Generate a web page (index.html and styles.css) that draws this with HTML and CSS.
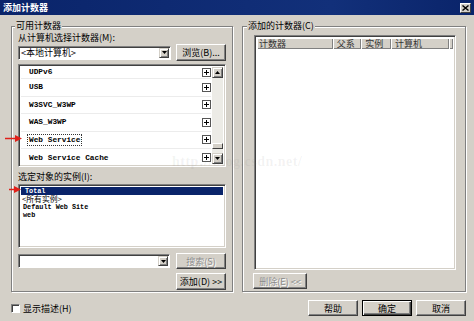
FILE: index.html
```html
<!DOCTYPE html>
<html>
<head>
<meta charset="utf-8">
<link rel="stylesheet" href="styles.css">
</head>
<body>
<div class="titlebar">
  <span class="title">添加计数器</span>
  <span class="close"><svg width="7" height="6" viewBox="0 0 7 6"><path d="M0.5 0.5 L6.5 5.5 M6.5 0.5 L0.5 5.5" stroke="#000" stroke-width="1.4"/></svg></span>
</div>
<div class="main">
  <div class="group gleft">
    <span class="legend">可用计数器</span>
    <div class="label">从计算机选择计数器(M):</div>
    <div class="row r1">
      <div class="combo c1"><span class="combo-text">&lt;本地计算机&gt;</span><span class="drop"><svg width="5" height="3" viewBox="0 0 5 3"><path d="M0 0H5L2.5 3Z" fill="#000"/></svg></span></div>
      <div class="btn browse">浏览(B)...</div>
    </div>
    <div class="sunken counters">
      <div class="rows">
        <div class="crow first"><span class="ctext">UDPv6</span><svg class="plus" width="9" height="9" viewBox="0 0 9 9"><rect x="0.5" y="0.5" width="8" height="8" fill="#fff" stroke="#555"/><path d="M2 4.5H7M4.5 2V7" stroke="#000"/></svg></div>
        <div class="crow"><span class="ctext">USB</span><svg class="plus" width="9" height="9" viewBox="0 0 9 9"><rect x="0.5" y="0.5" width="8" height="8" fill="#fff" stroke="#555"/><path d="M2 4.5H7M4.5 2V7" stroke="#000"/></svg></div>
        <div class="crow"><span class="ctext">W3SVC_W3WP</span><svg class="plus" width="9" height="9" viewBox="0 0 9 9"><rect x="0.5" y="0.5" width="8" height="8" fill="#fff" stroke="#555"/><path d="M2 4.5H7M4.5 2V7" stroke="#000"/></svg></div>
        <div class="crow"><span class="ctext">WAS_W3WP</span><svg class="plus" width="9" height="9" viewBox="0 0 9 9"><rect x="0.5" y="0.5" width="8" height="8" fill="#fff" stroke="#555"/><path d="M2 4.5H7M4.5 2V7" stroke="#000"/></svg></div>
        <div class="crow"><span class="ctext focus">Web Service</span><svg class="plus" width="9" height="9" viewBox="0 0 9 9"><rect x="0.5" y="0.5" width="8" height="8" fill="#fff" stroke="#555"/><path d="M2 4.5H7M4.5 2V7" stroke="#000"/></svg></div>
        <div class="crow last"><span class="ctext">Web Service Cache</span><svg class="plus" width="9" height="9" viewBox="0 0 9 9"><rect x="0.5" y="0.5" width="8" height="8" fill="#fff" stroke="#555"/><path d="M2 4.5H7M4.5 2V7" stroke="#000"/></svg></div>
      </div>
      <div class="scrollbar">
        <div class="sbtn"><svg width="5" height="3" viewBox="0 0 5 3"><path d="M0 3H5L2.5 0Z" fill="#000"/></svg></div>
        <div class="track"><div class="thumb"></div></div>
        <div class="sbtn"><svg width="5" height="3" viewBox="0 0 5 3"><path d="M0 0H5L2.5 3Z" fill="#000"/></svg></div>
      </div>
    </div>
    <div class="label l2">选定对象的实例(I):</div>
    <div class="sunken instances">
      <div class="inst sel"><span>Total</span></div>
      <div class="inst cjk">&lt;所有实例&gt;</div>
      <div class="inst">Default Web Site</div>
      <div class="inst">web</div>
    </div>
    <div class="row r3">
      <div class="combo c2"><span class="combo-text"></span><span class="drop"><svg width="5" height="3" viewBox="0 0 5 3"><path d="M0 0H5L2.5 3Z" fill="#000"/></svg></span></div>
      <div class="btn disabled search">搜索(S)</div>
    </div>
    <div class="row r4">
      <div class="btn add">添加(D) &gt;&gt;</div>
    </div>
  </div>
  <div class="group gright">
    <span class="legend">添加的计数器(C)</span>
    <div class="sunken listview">
      <div class="lvhead">
        <div class="hcell h1">计数器</div>
        <div class="hcell h2">父系</div>
        <div class="hcell h3">实例</div>
        <div class="hcell h4">计算机</div>
        <div class="hcell h5"></div>
      </div>
    </div>
    <div class="btn disabled del">删除(E) &lt;&lt;</div>
  </div>
</div>
<div class="bottom">
  <div class="check"><span class="cbox"></span><span>显示描述(H)</span></div>
  <div class="actions">
    <div class="btn act">帮助</div>
    <div class="btn act default">确定</div>
    <div class="btn act">取消</div>
  </div>
</div>
<div class="watermark">http://blog.csdn.net/</div>
<svg class="arrow a1" width="18" height="7" viewBox="0 0 18 7"><path d="M0 3.5H12" stroke="#e0201a" stroke-width="1.5"/><path d="M10 0L17 3.5L10 7Z" fill="#e0201a"/></svg>
<svg class="arrow a2" width="12" height="7" viewBox="0 0 12 7"><path d="M0 3.5H7" stroke="#e0201a" stroke-width="1.5"/><path d="M5 0L12 3.5L5 7Z" fill="#e0201a"/></svg>
</body>
</html>
```

FILE: styles.css
```css
* { box-sizing: border-box; }
html, body { margin: 0; padding: 0; }
body {
  position: relative;
  width: 474px;
  height: 321px;
  overflow: hidden;
  background: #d4d0c8;
  font-family: "Noto Sans CJK SC", "Noto Sans", sans-serif;
  font-size: 9px;
  line-height: 11px;
  color: #000;
}
.titlebar {
  height: 15px;
  background: linear-gradient(90deg, #0a246a, #12307a 70%, #0a246a);
  color: #fff;
  display: flex;
  align-items: center;
  justify-content: space-between;
  padding: 0 3px 0 3px;
}
.title { font-weight: bold; font-size: 9px; line-height: 15px; }
.close {
  width: 11px;
  height: 10px;
  background: #d4d0c8;
  border: 1px solid;
  border-color: #fff #404040 #404040 #fff;
  display: flex;
  align-items: center;
  justify-content: center;
}
.close svg { display: block; }
.main {
  display: flex;
  gap: 9px;
  padding: 11px 8px 0 11px;
}
.group {
  position: relative;
  height: 266px;
  border: 1px solid #808080;
  box-shadow: inset 1px 1px 0 #fff, 1px 1px 0 #fff;
}
.legend {
  position: absolute;
  top: -7px;
  left: 3px;
  padding: 0 1px;
  background: #d4d0c8;
  line-height: 11px;
  white-space: nowrap;
}
.gleft {
  width: 222px;
  padding: 5px 6px 0 6px;
  display: flex;
  flex-direction: column;
}
.gright {
  width: 224px;
  padding: 8px 8px 0 11px;
  display: flex;
  flex-direction: column;
}
.gright .legend { left: 4px; }
.label { line-height: 11px; height: 11px; white-space: nowrap; }
.row { display: flex; align-items: center; justify-content: space-between; }
.r1 { margin-top: 1px; height: 17px; }
.btn {
  display: flex;
  align-items: center;
  justify-content: center;
  background: #d4d0c8;
  border: 1px solid;
  border-color: #fff #404040 #404040 #fff;
  box-shadow: inset -1px -1px 0 #808080;
  font-size: 9px;
  line-height: 11px;
  white-space: nowrap;
}
.browse { width: 50px; height: 17px; }
.combo {
  display: flex;
  align-items: stretch;
  justify-content: space-between;
  height: 14px;
  background: #fff;
  border: 1px solid;
  border-color: #808080 #fff #fff #808080;
  box-shadow: inset 1px 1px 0 #404040;
  padding: 1px 1px 1px 2px;
}
.c1 { width: 153px; }
.c2 { width: 152px; }
.combo-text { line-height: 10px; white-space: nowrap; }
.drop {
  width: 10px;
  background: #d4d0c8;
  border: 1px solid;
  border-color: #d4d0c8 #404040 #404040 #d4d0c8;
  box-shadow: inset 1px 1px 0 #fff, inset -1px -1px 0 #808080;
  display: flex;
  align-items: center;
  justify-content: center;
}
.drop svg, .sbtn svg { display: block; }
.sunken {
  background: #fff;
  border: 1px solid;
  border-color: #808080 #fff #fff #808080;
  box-shadow: inset 1px 1px 0 #404040, inset -1px -1px 0 #d4d0c8;
}
.counters {
  margin-top: 3px;
  height: 103px;
  display: flex;
  padding: 2px 2px 2px 2px;
}
.rows {
  flex: 1;
  overflow: hidden;
  padding-right: 1px;
}
.crow {
  height: 17.5px;
  display: flex;
  align-items: center;
  justify-content: space-between;
  padding-left: 7px;
  border-bottom: 1px solid #ececec;
}
.crow.first { height: 12px; align-items: flex-end; padding-bottom: 1px; }
.crow.last { border-bottom: none; }
.ctext {
  font-family: "Liberation Mono", "DejaVu Sans Mono", monospace;
  font-weight: bold;
  font-size: 7.8px;
  line-height: 10px;
  padding: 0 1px;
  white-space: pre;
}
.ctext.focus { outline: 1px dotted #333; outline-offset: 0; }
.plus { display: block; }
.scrollbar {
  width: 11px;
  display: flex;
  flex-direction: column;
}
.sbtn {
  height: 11px;
  background: #d4d0c8;
  border: 1px solid;
  border-color: #d4d0c8 #404040 #404040 #d4d0c8;
  box-shadow: inset 1px 1px 0 #fff, inset -1px -1px 0 #808080;
  display: flex;
  align-items: center;
  justify-content: center;
}
.track {
  flex: 1;
  background: #ecebe6;
  display: flex;
  flex-direction: column;
  justify-content: flex-end;
  padding-bottom: 4px;
}
.thumb {
  height: 6px;
  background: #d4d0c8;
  border: 1px solid;
  border-color: #fff #404040 #404040 #fff;
}
.l2 { margin-top: 4px; }
.instances {
  margin-top: 2px;
  height: 64px;
  padding: 2px 2px;
}
.inst {
  height: 8px;
  line-height: 8px;
  padding-left: 2px;
  font-family: "Liberation Mono", "DejaVu Sans Mono", monospace;
  font-weight: bold;
  font-size: 6.8px;
  white-space: pre;
}
.inst.sel {
  background: #0a246a;
  color: #fff;
  padding-left: 4px;
}
.inst.cjk {
  font-family: "Noto Sans CJK SC", sans-serif;
  font-weight: normal;
  font-size: 7.8px;
  line-height: 8px;
  padding-left: 1px;
}
.r3 { margin-top: 5px; height: 16px; }
.search { width: 50px; height: 16px; }
.disabled { color: #8a8a8a; text-shadow: 1px 1px 0 #fff; }
.r4 { margin-top: 4px; justify-content: flex-end; }
.add { width: 50px; height: 17px; }
.listview {
  width: 202px;
  height: 235px;
  padding: 2px;
}
.lvhead { display: flex; height: 11px; }
.hcell {
  height: 11px;
  background: #d4d0c8;
  box-shadow: inset 1px 1px 0 #fff, inset -1px -1px 0 #808080;
  color: #333;
  font-size: 9px;
  line-height: 11px;
  padding-left: 4px;
  white-space: nowrap;
}
.h1 { width: 77px; padding-left: 2px; }
.h2 { width: 29px; }
.h3 { width: 30px; }
.h4 { width: 59px; }
.h5 { flex: 1; }
.del { width: 54px; height: 16px; margin-top: 3px; margin-left: -1px; }
.bottom {
  display: flex;
  align-items: center;
  justify-content: space-between;
  margin-top: 8px;
  padding: 0 8px 0 11px;
  height: 16px;
}
.check { display: flex; align-items: center; gap: 3px; white-space: nowrap; }
.cbox {
  width: 9px;
  height: 9px;
  background: #fff;
  border: 1px solid;
  border-color: #808080 #fff #fff #808080;
  box-shadow: inset 1px 1px 0 #404040;
}
.actions { display: flex; gap: 4px; }
.act { width: 50px; height: 16px; }
.act.default {
  border: 1px solid #000;
  box-shadow: inset 1px 1px 0 #fff, inset -1px -1px 0 #404040, inset -2px -2px 0 #808080;
}
.watermark {
  position: absolute;
  left: 172px;
  top: 156px;
  font-family: "Liberation Serif", serif;
  font-weight: bold;
  font-size: 14px;
  letter-spacing: 0.5px;
  color: rgba(120, 120, 120, 0.09);
  white-space: nowrap;
  pointer-events: none;
}
.arrow { position: absolute; display: block; }
.a1 { left: 5px; top: 135px; }
.a2 { left: 9px; top: 186px; }
```
